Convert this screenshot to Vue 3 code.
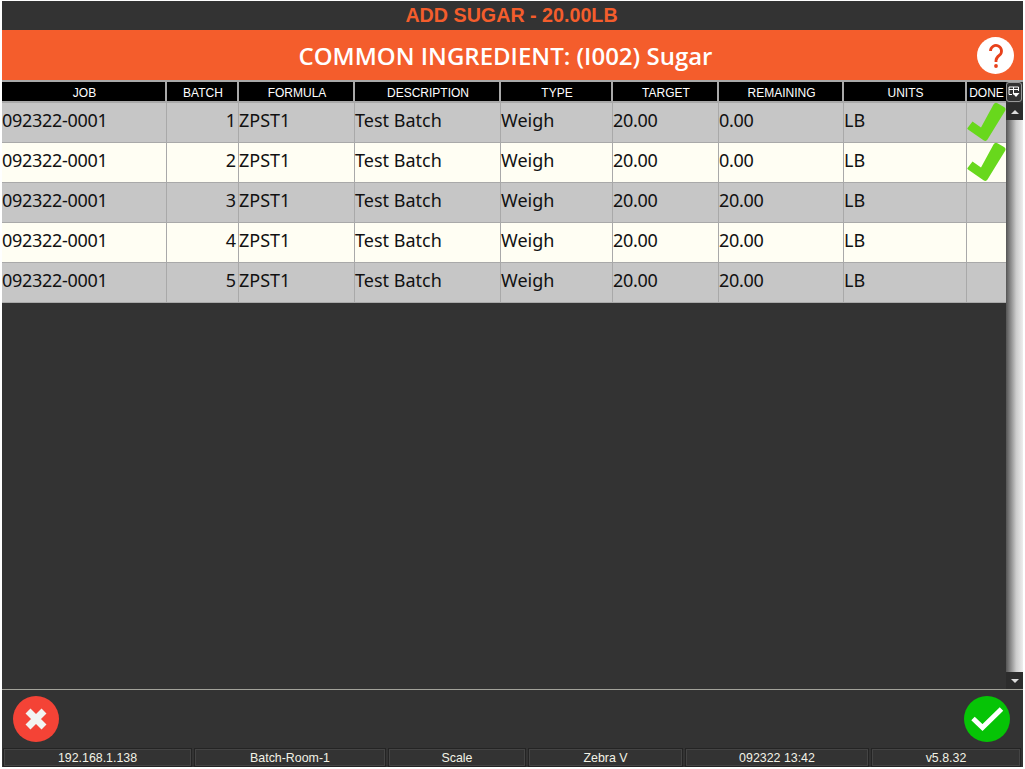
<script setup>
const columns = [
  { label: 'JOB', key: 'job', num: true },
  { label: 'BATCH', key: 'batch', right: true },
  { label: 'FORMULA', key: 'formula' },
  { label: 'DESCRIPTION', key: 'description' },
  { label: 'TYPE', key: 'type' },
  { label: 'TARGET', key: 'target', num: true },
  { label: 'REMAINING', key: 'remaining', num: true },
  { label: 'UNITS', key: 'units' }
]
const rows = [1, 2, 3, 4, 5].map((batch) => ({
  job: '092322-0001',
  batch,
  formula: 'ZPST1',
  description: 'Test Batch',
  type: 'Weigh',
  target: '20.00',
  remaining: batch < 3 ? '0.00' : '20.00',
  units: 'LB',
  done: batch < 3
}))
const statuses = [
  { text: '192.168.1.138', w: 189 },
  { text: 'Batch-Room-1', w: 192 },
  { text: 'Scale', w: 138 },
  { text: 'Zebra V', w: 155 },
  { text: '092322 13:42', w: 184 },
  { text: 'v5.8.32', w: 150 }
]
</script>

<template>
  <div class="screen">
    <div class="title">ADD SUGAR - 20.00LB</div>
    <div class="banner">
      <span>COMMON INGREDIENT: (I002) Sugar</span>
      <svg class="help" viewBox="0 0 37 37">
        <circle cx="18.500" cy="18.500" r="18.500" fill="#fff" />
        <path d="M13.500 14 a5.500 5.500 0 1 1 9 4.200 c-2 1.600 -3.500 2.800 -3.500 5.300 v1.500" fill="none" stroke="#e8401a" stroke-width="2.800" />
        <circle cx="19" cy="29" r="1.900" fill="#e8401a" />
      </svg>
    </div>
    <div class="grid-area">
      <div class="table">
        <div class="row head">
          <div v-for="c in columns" :key="c.key" class="cell">{{ c.label }}</div>
          <div class="cell done-head">DONE</div>
        </div>
        <div v-for="(r, i) in rows" :key="r.batch" class="row body" :class="i % 2 ? 'light' : 'grey'">
          <div
            v-for="c in columns"
            :key="c.key"
            class="cell"
            :class="{ right: c.right, num: c.num }"
          >{{ r[c.key] }}</div>
          <div class="cell check-cell">
            <svg v-if="r.done" class="check" viewBox="0 0 40 40">
              <path d="M1.500 26 L6.500 19.500 L15 25.500 L27.500 2.500 Q29 0 31.500 1.200 L38 5 Q40.500 6.500 39 9 L21.500 37.500 Q20 40 17.500 38.300 L2 27.500 Q1 26.800 1.500 26 Z" fill="#68d81c" />
            </svg>
          </div>
        </div>
      </div>
      <div class="side">
        <div class="chooser">
          <svg viewBox="0 0 12 12" width="12" height="12">
            <path d="M4 8.500H1V1H10.500V5M1 3.500H10.500M5.500 1V8.500" fill="none" stroke="#fff" stroke-width="1" />
            <path d="M4.500 7H11.500L8 11Z" fill="#fff" />
          </svg>
        </div>
        <div class="scrollbar">
          <div class="arrow up"><i></i></div>
          <div class="track"></div>
          <div class="arrow down"><i></i></div>
        </div>
      </div>
    </div>
    <div class="actions">
      <svg class="round" viewBox="0 0 46 46">
        <circle cx="23" cy="23" r="23" fill="#f44336" />
        <path d="M15 15 L31 31 M31 15 L15 31" stroke="#f2f4f2" stroke-width="7" />
      </svg>
      <svg class="round" viewBox="0 0 46 46">
        <circle cx="23" cy="23" r="23" fill="#06c406" />
        <path d="M9 22.500 L18.500 31.500 L37.500 13" fill="none" stroke="#fff" stroke-width="5" />
      </svg>
    </div>
    <div class="status">
      <div v-for="s in statuses" :key="s.text" class="stat" :style="{ width: s.w + 'px' }">{{ s.text }}</div>
    </div>
  </div>
</template>

<style>
html, body { margin: 0; background: #fff; }
</style>

<style scoped>
.screen {
  width: 1021px;
  height: 766px;
  margin: 1px 2px 0 2px;
  background: #333;
  display: flex;
  flex-direction: column;
  overflow: hidden;
  font-family: "Liberation Sans", Arial, sans-serif;
}
.title {
  height: 29px;
  line-height: 29px;
  padding-right: 2px;
  text-align: center;
  color: #f45d2c;
  font-size: 19.7px;
  font-weight: 700;
}
.banner {
  height: 50px;
  box-sizing: border-box;
  padding-right: 14px;
  background: #f45d2c;
  color: #fff;
  font-family: "Open Sans", sans-serif;
  font-size: 24px;
  font-weight: 600;
  display: flex;
  align-items: center;
  justify-content: center;
  position: relative;
}
.help {
  position: absolute;
  right: 9px;
  top: 7px;
  width: 37px;
  height: 37px;
}
.grid-area {
  height: 610px;
  box-sizing: border-box;
  display: flex;
  border-top: 2px solid #a9a9a9;
  border-bottom: 1px solid #a3a39b;
}
.table { width: 1004px; }
.row {
  display: grid;
  grid-template-columns: 165px 72px 116px 146px 112px 106px 125px 123px 39px;
  box-sizing: border-box;
  border-bottom: 1px solid #a9a9a9;
}
.head {
  height: 21px;
  background: #000;
  color: #fff;
  font-size: 12px;
  line-height: 23px;
  text-align: center;
  border-bottom: 2px solid #a9a9a9;
}
.head .cell {
  border-right: 2px solid #a9a9a9;
  box-sizing: border-box;
  overflow: hidden;
  padding-left: 2px;
}
.head .done-head { border-right: 0; padding-left: 0; }
.body {
  height: 40px;
  font-family: "Noto Sans", sans-serif;
  font-size: 18px;
  color: #111;
  line-height: 34px;
}
.grey { background: #c6c6c6; }
.light { background: #fffef3; }
.body .cell {
  border-right: 1px solid #a9a9a9;
  box-sizing: border-box;
  white-space: nowrap;
}
.body .num { letter-spacing: -0.3px; }
.body .right { text-align: right; padding-right: 2px; }
.body .check-cell { border-right: 0; position: relative; }
.check {
  position: absolute;
  left: -1px;
  top: -1px;
  width: 40px;
  height: 40px;
}
.side {
  width: 17px;
  display: flex;
  flex-direction: column;
}
.chooser {
  height: 20px;
  width: 16px;
  box-sizing: border-box;
  background: #333;
  border: 1px solid #999;
  border-radius: 3px;
  display: flex;
  align-items: center;
  justify-content: center;
}
.scrollbar { flex: 1; display: flex; flex-direction: column; padding-top: 1px; }
.arrow {
  height: 17px;
  background: #2c2c2c;
  display: flex;
  align-items: center;
  justify-content: center;
}
.arrow i {
  width: 0;
  height: 0;
  border-left: 4px solid transparent;
  border-right: 4px solid transparent;
}
.up i { border-bottom: 4px solid #ddd; }
.down i { border-top: 4px solid #ddd; }
.track {
  flex: 1;
  background: linear-gradient(to right, #555, #ccc 60%, #eee);
}
.actions {
  height: 58px;
  box-sizing: border-box;
  padding: 6px 13px 0 11px;
  display: flex;
  justify-content: space-between;
  align-items: flex-start;
}
.round { width: 46px; height: 46px; display: block; }
.status {
  height: 19px;
  display: flex;
  gap: 2px;
  padding-left: 1px;
}
.stat {
  box-sizing: border-box;
  height: 19px;
  border: 1px solid #242424;
  outline: 1px solid #444;
  outline-offset: -2px;
  color: #f2f2e6;
  font-size: 12.4px;
  line-height: 19px;
  text-align: center;
}
</style>
